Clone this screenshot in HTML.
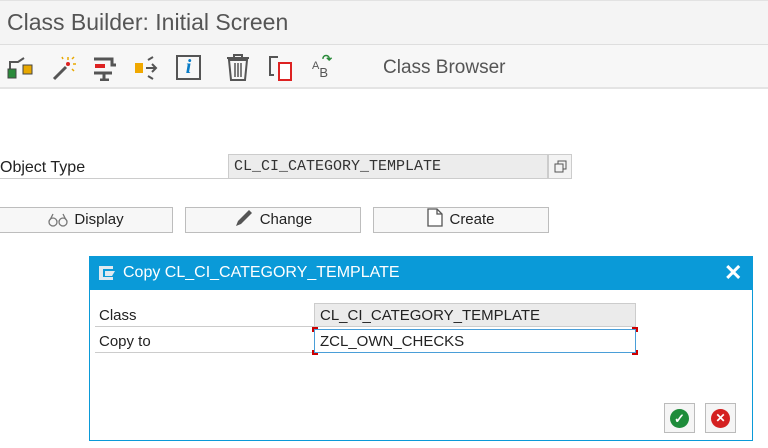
<!DOCTYPE html>
<html><head><meta charset="utf-8"><style>
*{margin:0;padding:0;box-sizing:border-box}
body{width:768px;height:448px;overflow:hidden;background:#fff;font-family:"Liberation Sans",sans-serif;position:relative;color:#222}
.a{position:absolute}
.title{left:0;top:0;width:768px;height:45px;background:#f4f4f4;border-top:1px solid #e2e2e2;border-bottom:1px solid #dedede}
.title span{position:absolute;left:7px;top:8px;font-size:23px;color:#555}
.tb{left:0;top:45px;width:768px;height:44px;background:#f7f7f7;border-bottom:2px solid #e4e4e4}
.lbl{font-size:15px;color:#222}
.btn{height:26px;background:#f7f7f7;border:1px solid #bdbdbd;font-size:15px;text-align:center;line-height:24px;color:#222}
.btn svg{vertical-align:-3px;margin-right:6px}
</style></head><body>
<div class="a title"><span>Class Builder: Initial Screen</span></div>
<div class="a tb">
<svg class="a" style="left:6px;top:10px" width="28" height="26" viewBox="0 0 28 26"><path d="M4 14V7h8l6-4" stroke="#555" stroke-width="2" fill="none"/><rect x="2" y="14" width="8" height="9" fill="#2a8a3a" stroke="#444"/><rect x="17" y="10" width="9" height="9" fill="#e8a800" stroke="#444"/></svg>
<svg class="a" style="left:50px;top:10px" width="26" height="26" viewBox="0 0 26 26"><path d="M4 24L16 12" stroke="#555" stroke-width="3"/><circle cx="18" cy="9" r="2" fill="#d22"/><path d="M18 2v3M23 9h3M22 4l2-2M22 14l2 2M13 4l-1-2" stroke="#e8a800" stroke-width="1.5"/></svg>
<svg class="a" style="left:92px;top:10px" width="26" height="26" viewBox="0 0 26 26"><path d="M2 4h18v6h4M2 18h18M12 18v7M8 25h9" stroke="#555" stroke-width="3" fill="none"/><rect x="3" y="9" width="10" height="4" fill="#d22"/></svg>
<svg class="a" style="left:134px;top:10px" width="26" height="26" viewBox="0 0 26 26"><rect x="1" y="8" width="8" height="10" fill="#f0a800"/><path d="M12 13h10M18 9l4 4-4 4M14 5l5-3M14 21l5 3" stroke="#555" stroke-width="2" fill="none"/></svg>
<div class="a" style="left:176px;top:10px;width:25px;height:25px;border:2px solid #555;color:#0a7cc6;font:italic bold 20px 'Liberation Serif',serif;text-align:center;line-height:21px">i</div>
<svg class="a" style="left:226px;top:9px" width="24" height="27" viewBox="0 0 24 27"><path d="M1 4h22M8 4V1h8v3M3 6h18l-2 20H5z" stroke="#555" stroke-width="2" fill="none"/><path d="M9 9v14M12 9v14M15 9v14" stroke="#555" stroke-width="1.5"/></svg>
<svg class="a" style="left:268px;top:10px" width="26" height="26" viewBox="0 0 26 26"><path d="M10 2H2v18h4" stroke="#555" stroke-width="2" fill="none"/><rect x="11" y="8" width="12" height="17" fill="#fff" stroke="#d22" stroke-width="2"/></svg>
<div class="a" style="left:312px;top:12px;font-size:11px;color:#555">A<span style="position:relative;top:8px;font-size:13px">B</span></div>
<div class="a" style="left:322px;top:7px;color:#2a8a3a;font-size:12px;font-weight:bold">↷</div>
<div class="a" style="left:383px;top:12px;font-size:19px;color:#555">Class Browser</div>
</div>
<div class="a lbl" style="left:0;top:159px;font-size:16px">Object Type</div>
<div class="a" style="left:0;top:178px;width:228px;height:1px;background:#ccc"></div>
<div class="a" style="left:228px;top:154px;width:320px;height:25px;background:#ececec;border:1px solid #ccc;font:15px 'Liberation Mono',monospace;padding:3px 5px;color:#333">CL_CI_CATEGORY_TEMPLATE</div>
<div class="a" style="left:548px;top:154px;width:24px;height:25px;background:#f3f3f3;border:1px solid #ccc"><svg style="margin:5px 5px" width="13" height="13" viewBox="0 0 13 13"><rect x="1" y="4" width="8" height="8" fill="none" stroke="#555"/><path d="M4 4V1h8v8H9" fill="none" stroke="#555"/></svg></div>
<div class="a btn" style="left:-1px;top:207px;width:174px"><svg width="20" height="14" viewBox="0 0 20 14"><circle cx="5" cy="9" r="4" fill="none" stroke="#777" stroke-width="1.3"/><circle cx="15" cy="9" r="4" fill="none" stroke="#777" stroke-width="1.3"/><path d="M2 7L5 1M18 7L15 1" stroke="#777" stroke-width="1.3"/></svg>Display</div>
<div class="a btn" style="left:185px;top:207px;width:176px"><svg width="20" height="18" viewBox="0 0 20 18"><path d="M2 17l2-5L15 1l3 3L7 15z" fill="#555"/></svg>Change</div>
<div class="a btn" style="left:373px;top:207px;width:176px"><svg width="16" height="19" viewBox="0 0 16 19"><path d="M1 1h9l5 5v12H1z" fill="#fff" stroke="#555" stroke-width="1.3"/><path d="M10 1v5h5" fill="none" stroke="#555" stroke-width="1.3"/></svg>Create</div>
<div class="a" style="left:89px;top:256px;width:664px;height:185px;border:1px solid #0a9ad8;background:#fff">
<div class="a" style="left:0;top:0;width:662px;height:33px;background:#0a9ad8;color:#fff;font-size:16px">
<svg class="a" style="left:8px;top:8px" width="18" height="16" viewBox="0 0 18 16"><path d="M1 1h14v3H5v8h10v3H1z" fill="#dfe9f0"/><path d="M7 6h10l-3 5H7z" fill="#dfe9f0"/></svg>
<span class="a" style="left:33px;top:7px">Copy CL_CI_CATEGORY_TEMPLATE</span>
<span class="a" style="left:634px;top:3px;font-size:22px;font-weight:bold">✕</span></div>
<div class="a lbl" style="left:9px;top:50px">Class</div>
<div class="a" style="left:5px;top:69px;width:220px;height:1px;background:#ccc"></div>
<div class="a" style="left:224px;top:46px;width:322px;height:24px;background:#ebebeb;border:1px solid #ccc;font-size:15px;padding:3px 5px">CL_CI_CATEGORY_TEMPLATE</div>
<div class="a lbl" style="left:9px;top:76px">Copy to</div>
<div class="a" style="left:5px;top:95px;width:220px;height:1px;background:#ccc"></div>
<div class="a" style="left:224px;top:72px;width:322px;height:24px;background:#fff;border:1px solid #4a9ed8;font-size:15px;padding:3px 5px">ZCL_OWN_CHECKS</div>
<div class="a" style="left:222px;top:70px;width:6px;height:5px;border-left:2px solid #c00;border-top:2px solid #c00"></div>
<div class="a" style="left:222px;top:93px;width:6px;height:5px;border-left:2px solid #c00;border-bottom:2px solid #c00"></div>
<div class="a" style="left:542px;top:70px;width:6px;height:5px;border-right:2px solid #c00;border-top:2px solid #c00"></div>
<div class="a" style="left:542px;top:93px;width:6px;height:5px;border-right:2px solid #c00;border-bottom:2px solid #c00"></div>
<div class="a" style="left:574px;top:146px;width:31px;height:30px;background:#f5f5f5;border:1px solid #bbb"><div style="margin:5px auto;width:19px;height:19px;border-radius:50%;background:#1e8c3a;color:#fff;font-size:13px;text-align:center;line-height:19px;font-weight:bold">✓</div></div>
<div class="a" style="left:615px;top:146px;width:31px;height:30px;background:#f5f5f5;border:1px solid #bbb"><div style="margin:5px auto;width:19px;height:19px;border-radius:50%;background:#d42020;color:#fff;font-size:12px;text-align:center;line-height:19px;font-weight:bold">✕</div></div>
</div>
</body></html>
